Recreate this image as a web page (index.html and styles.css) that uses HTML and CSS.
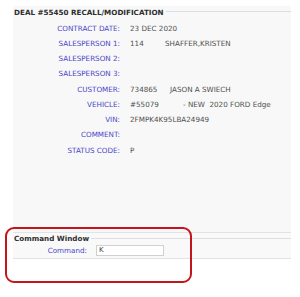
FILE: index.html
```html
<!DOCTYPE html>
<html lang="en">
<head>
<meta charset="UTF-8" />
<meta name="viewport" content="width=device-width, initial-scale=1" />
<title>Deal Recall</title>
<link rel="stylesheet" href="styles.css">
</head>
<body>

<div class="page">
  <div class="panel">
    <div class="legend">
      <span class="legend-text">DEAL #55450 RECALL/MODIFICATION</span>
      <span class="legend-line"></span>
    </div>
    <div class="fields">
      <div class="row"><span class="label">CONTRACT DATE:</span><span class="value">23 DEC 2020</span></div>
      <div class="row"><span class="label">SALESPERSON 1:</span><span class="value"><span class="code sp">114</span>SHAFFER,KRISTEN</span></div>
      <div class="row"><span class="label">SALESPERSON 2:</span><span class="value"></span></div>
      <div class="row"><span class="label">SALESPERSON 3:</span><span class="value"></span></div>
      <div class="row"><span class="label">CUSTOMER:</span><span class="value"><span class="code cust">734865</span>JASON A SWIECH</span></div>
      <div class="row"><span class="label">VEHICLE:</span><span class="value"><span class="code veh">#55079</span><span class="pre">- NEW  2020 FORD Edge</span></span></div>
      <div class="row"><span class="label">VIN:</span><span class="value">2FMPK4K95LBA24949</span></div>
      <div class="row"><span class="label">COMMENT:</span><span class="value"></span></div>
      <div class="row"><span class="label">STATUS CODE:</span><span class="value">P</span></div>
    </div>
  </div>

  <div class="command">
    <div class="legend small">
      <span class="legend-text">Command Window</span>
      <span class="legend-line"></span>
    </div>
    <div class="command-row">
      <label class="label cmd-label" for="cmd">Command:</label>
      <input id="cmd" class="cmd-input" type="text" value="K">
    </div>
  </div>

  <div class="highlight"></div>
</div>

</body>
</html>
```

FILE: styles.css
```css
body {
  margin: 0;
  background: #fff;
  font-family: "DejaVu Sans", Verdana, sans-serif;
  font-size: 7.2px;
  color: #505050;
}

.page {
  position: relative;
  width: 300px;
  height: 297px;
  padding: 6px 9px 0 13px;
  box-sizing: border-box;
}

.panel {
  height: 226px;
  background: #f8f8f8;
  box-sizing: border-box;
}

.legend {
  display: flex;
  align-items: center;
  height: 12px;
  padding-left: 1px;
}

.legend-text {
  font-weight: bold;
  color: #2e2e2e;
  white-space: nowrap;
  padding-right: 2px;
}

.legend-line {
  flex: 1;
  border-top: 1px solid #dedede;
  margin-top: -1px;
}

.fields {
  padding-top: 2.4px;
}

.row {
  display: flex;
  align-items: center;
  height: 15.25px;
}

.label {
  color: #4a46c8;
  text-align: right;
  white-space: nowrap;
}

.row .label {
  width: 107px;
}

.value {
  padding-left: 10px;
  display: flex;
  white-space: nowrap;
}

.code {
  display: inline-block;
}

.code.sp {
  width: 35px;
}

.code.cust {
  width: 40px;
}

.code.veh {
  width: 53px;
}

.pre {
  white-space: pre;
}

.command {
  background: #f9f9f9;
  border-top: 1px solid #e3e3e3;
  border-bottom: 1px solid #e3e3e3;
  height: 25px;
}

.legend.small {
  height: 9px;
  margin-top: 1px;
}

.command-row {
  display: flex;
  align-items: center;
  height: 14px;
}

.cmd-label {
  width: 74px;
}

.cmd-input {
  margin: 0 0 0 9px;
  width: 68px;
  height: 11px;
  box-sizing: border-box;
  border: 1px solid #d0d0d0;
  background: #fff;
  font-family: "DejaVu Sans", Verdana, sans-serif;
  font-size: 7px;
  color: #444;
  padding: 0 2px;
}

.highlight {
  position: absolute;
  left: 5px;
  top: 227px;
  width: 187px;
  height: 56px;
  box-sizing: border-box;
  border: 2px solid #c4141c;
  border-radius: 9px;
}
```
